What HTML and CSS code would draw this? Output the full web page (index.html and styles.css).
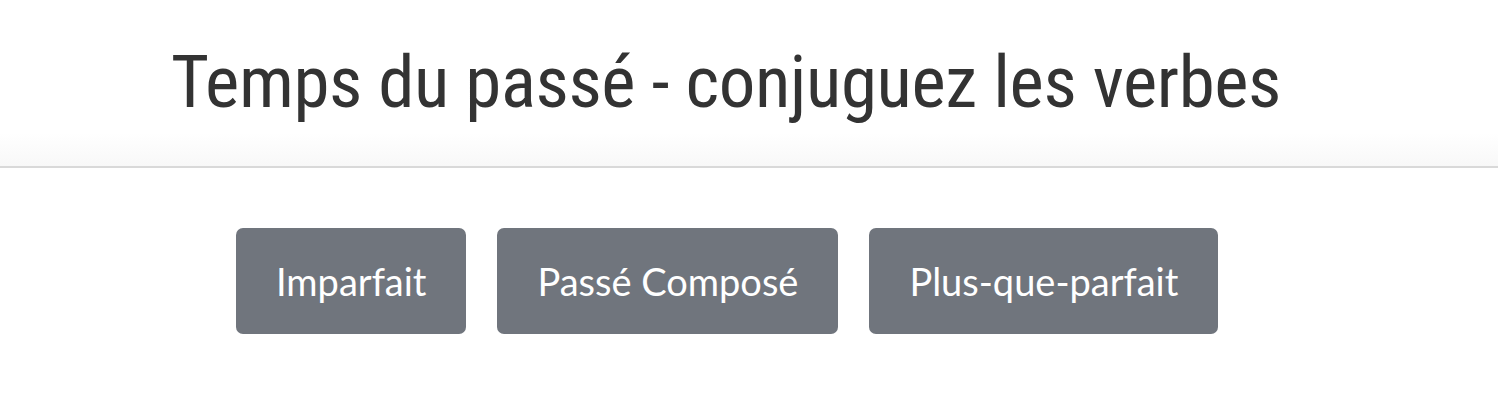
FILE: index.html
```html
<!DOCTYPE html>
<html lang="fr">
<head>
    <meta charset="UTF-8">
    <meta name="viewport" content="width=device-width, initial-scale=1.0">
    <title>Temps du passé</title>
    <link rel="stylesheet" href="styles.css">
</head>
<body>
    <header class="header">
        <h1>Temps du passé - conjuguez les verbes</h1>
    </header>

    <div class="tenses">
        <button class="tense-btn" type="button">Imparfait</button>
        <button class="tense-btn" type="button">Passé Composé</button>
        <button class="tense-btn" type="button">Plus-que-parfait</button>
    </div>
</body>
</html>
```

FILE: styles.css
```css
body {
    margin: 0;
    background: #fff;
    font-family: 'Lato', sans-serif;
}

.header {
    height: 168px;
    padding-left: 171px;
    border-bottom: 2px solid #d9d9d9;
    background: linear-gradient(to bottom, #fff 80%, #f8f8f8 100%);
    box-sizing: border-box;
}

h1 {
    margin: 0;
    padding-top: 37px;
    font-family: 'Roboto', sans-serif;
    font-stretch: 75%;
    font-size: 73px;
    font-weight: 400;
    letter-spacing: -0.4px;
    line-height: 90px;
    color: #333;
}

.tenses {
    display: flex;
    gap: 31px;
    padding: 60px 0 0 236px;
}

.tense-btn {
    height: 106px;
    padding: 0 40px;
    border: none;
    border-radius: 7px;
    background: #70757d;
    color: #fff;
    font-family: 'Lato', sans-serif;
    font-size: 38px;
    cursor: pointer;
}
```
